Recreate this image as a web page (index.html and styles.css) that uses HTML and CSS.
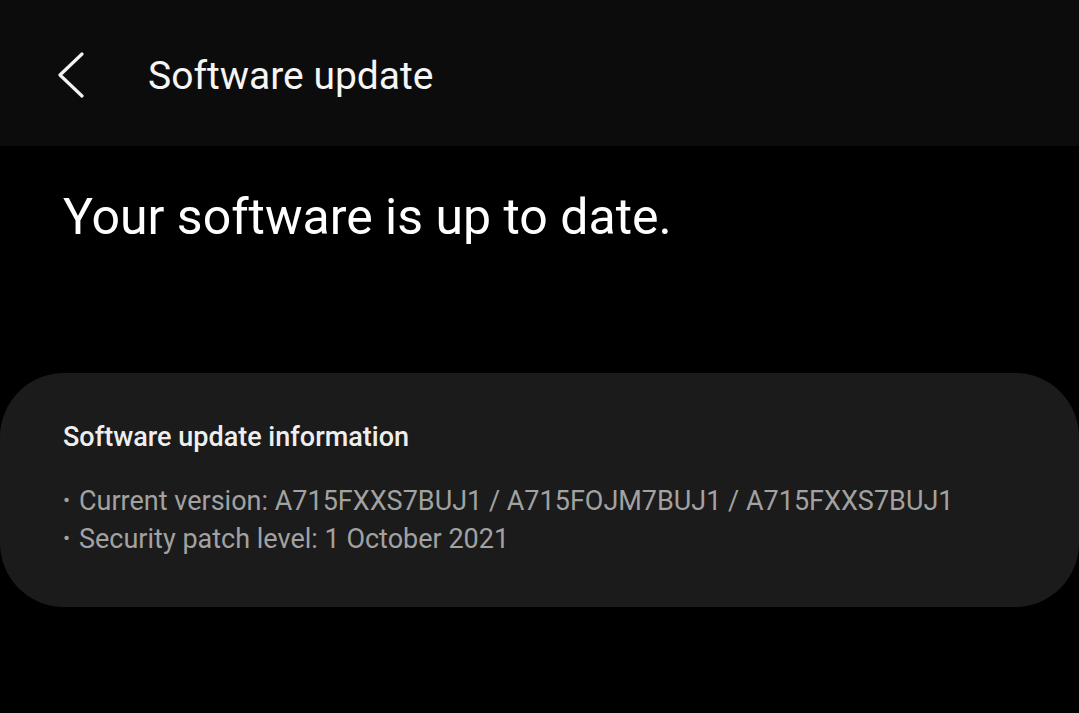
FILE: index.html
```html
<!DOCTYPE html>
<html lang="en">
<head>
<meta charset="utf-8">
<title>Software update</title>
<link rel="stylesheet" href="styles.css">
</head>
<body>
<header class="appbar">
  <button class="back" aria-label="Back">
    <svg width="28" height="46" viewBox="0 0 28 46"><path d="M25 2 L3 23 L25 44" fill="none" stroke="#f2f2f2" stroke-width="3.2" stroke-linecap="round" stroke-linejoin="round"/></svg>
  </button>
  <h1 class="appbar-title">Software update</h1>
</header>
<main class="content">
  <h2 class="status">Your software is up to date.</h2>
  <section class="card">
    <h3 class="card-title">Software update information</h3>
    <ul class="info">
      <li>Current version: A715FXXS7BUJ1 / A715FOJM7BUJ1 / A715FXXS7BUJ1</li>
      <li>Security patch level: 1 October 2021</li>
    </ul>
  </section>
</main>
</body>
</html>
```
FILE: styles.css
```css
html, body {
  margin: 0;
  padding: 0;
  background: #000;
  height: 100%;
}
body {
  font-family: Roboto, "Liberation Sans", sans-serif;
  color: #f5f5f5;
  overflow: hidden;
}
.appbar {
  height: 146px;
  background: #0c0c0c;
  display: flex;
  align-items: center;
  padding-left: 57px;
  box-sizing: border-box;
}
.back {
  background: none;
  border: 0;
  padding: 0;
  width: 28px;
  height: 46px;
  display: flex;
  margin-top: 4px;
}
.appbar-title {
  margin: 5px 0 0 63px;
  font-size: 39px;
  font-weight: 400;
  color: #f5f5f5;
}
.content {
  display: flex;
  flex-direction: column;
}
.status {
  margin: 42px 0 0 63px;
  font-size: 50px;
  font-weight: 400;
  line-height: 58px;
  color: #ffffff;
}
.card {
  margin-top: 127px;
  background: #1b1b1b;
  border-radius: 64px;
  height: 234px;
  box-sizing: border-box;
  padding: 47px 63px 0;
}
.card-title {
  margin: 0;
  font-size: 27px;
  font-weight: 500;
  line-height: 34px;
  color: #eeeeee;
}
.info {
  list-style: none;
  margin: 28px 0 0;
  padding: 0;
  font-size: 27px;
  line-height: 38px;
  color: #a2a2a2;
}
.info li::before {
  content: "\2022";
  display: inline-block;
  font-size: 21px;
  width: 16px;
  vertical-align: top;
  line-height: 36px;
}
```
